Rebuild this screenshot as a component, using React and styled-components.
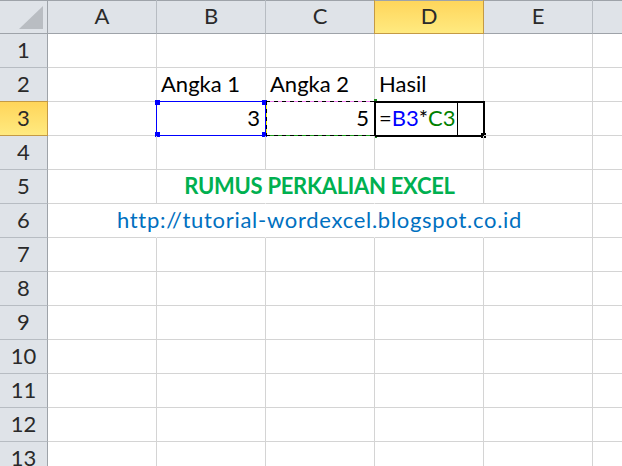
import React from 'react';
import styled, { createGlobalStyle, css } from 'styled-components';

const GlobalStyle = createGlobalStyle`
  html, body { margin: 0; padding: 0; background: #fff; }
  body { width: 622px; height: 466px; overflow: hidden; }
  #root { width: 622px; height: 466px; overflow: hidden; }
`;

const FONT = `Lato, "Open Sans", "Liberation Sans", sans-serif`;
const HEAD_LINE = '#b7bcc2';
const HEAD_DARK = '#9ea3a9';
const GRID = '#d4d4d4';
const SEL_BORDER = '#c49a45';

const Sheet = styled.div`
  display: grid;
  grid-template-columns: 48px repeat(6, 109px);
  grid-template-rows: repeat(14, 34px);
  width: 702px;
  background: #fff;
  font-family: ${FONT};
  font-size: 22px;
  color: #000;
`;

const headerBase = css`
  box-sizing: border-box;
  position: relative;
  display: flex;
  align-items: center;
  justify-content: center;
  background: #dfe3e8;
  color: #2a2a2a;
  line-height: 1.2;
  border-right: 1px solid ${HEAD_LINE};
  border-bottom: 1px solid ${HEAD_LINE};
`;

const activeHeader = css`
  background: linear-gradient(#ffd55a, #ffea80);
  border-right-color: ${SEL_BORDER};
  border-bottom-color: ${SEL_BORDER};
`;

const Corner = styled.div`
  ${headerBase}
  justify-content: flex-end;
  align-items: flex-end;
  padding: 0 4px 4px 0;
  border-right-color: ${HEAD_DARK};
  border-bottom-color: ${HEAD_DARK};
  box-shadow: inset 0 1px 0 ${HEAD_DARK};
`;

const CornerTriangle = styled.div`
  width: 24px;
  height: 23px;
  background: #b9bdc2;
  clip-path: polygon(100% 0, 100% 100%, 0 100%);
`;

const ColHeader = styled.div`
  ${headerBase}
  border-bottom-color: ${HEAD_DARK};
  box-shadow: inset 0 1px 0 ${HEAD_DARK};
  ${p => p.$active && css`
    ${activeHeader}
    box-shadow: inset 0 1px 0 ${HEAD_DARK}, -1px 0 0 ${SEL_BORDER};
  `}
`;

const RowHeader = styled.div`
  ${headerBase}
  border-right-color: ${HEAD_DARK};
  ${p => p.$active && css`
    ${activeHeader}
    box-shadow: 0 -1px 0 ${SEL_BORDER};
  `}
`;

const justifyMap = { left: 'flex-start', right: 'flex-end', center: 'center' };

const Cell = styled.div`
  box-sizing: border-box;
  position: relative;
  display: flex;
  align-items: center;
  justify-content: ${p => justifyMap[p.$align || 'left']};
  padding: 0 5px 0 4px;
  border-right: 1px solid ${p => (p.$open ? '#fff' : GRID)};
  border-bottom: 1px solid ${GRID};
  white-space: nowrap;
  line-height: 1.2;
  min-width: 0;
`;

const Text = styled.span`
  color: ${p => p.$color || '#000'};
  font-weight: ${p => (p.$bold ? 700 : 400)};
  letter-spacing: ${p => p.$spacing || 0}px;
`;

const RangeBox = styled.div`
  position: absolute;
  top: -1px;
  left: -1px;
  right: -1px;
  bottom: -1px;
  border: 1px solid #0000ff;
  pointer-events: none;
`;

const Handle = styled.div`
  position: absolute;
  width: ${p => p.$size || 5}px;
  height: ${p => p.$size || 5}px;
  background: ${p => p.$color};
  ${p => (p.$v === 'top' ? 'top: -2px;' : 'bottom: -2px;')}
  ${p => (p.$h === 'left' ? 'left: -2px;' : 'right: -2px;')}
`;

const Marquee = styled.div`
  position: absolute;
  top: -1px;
  left: 0;
  right: -1px;
  bottom: -1px;
  pointer-events: none;
  background:
    repeating-linear-gradient(90deg, #000 0 4px, #f07ef0 4px 8px) top left / 100% 1px no-repeat,
    repeating-linear-gradient(90deg, #000 0 4px, #1a9a1a 4px 8px) bottom left / 100% 1px no-repeat,
    repeating-linear-gradient(180deg, #000 0 4px, #f0f000 4px 8px) top left / 1px 100% no-repeat,
    repeating-linear-gradient(180deg, #1a9a1a 0 4px, #f07ef0 4px 8px) top right / 1px 100% no-repeat;
`;

const ActiveBox = styled.div`
  position: absolute;
  top: -1px;
  left: -1px;
  right: -2px;
  bottom: -2px;
  border: 2px solid #000;
  pointer-events: none;
`;

const FillHandle = styled.div`
  position: absolute;
  right: -4px;
  bottom: -4px;
  width: 5px;
  height: 5px;
  background: #000;
  border: 1px solid #fff;
  border-left-width: 0;
  border-top-width: 0;
`;

const Formula = styled.div`
  display: flex;
  align-items: center;
  align-self: stretch;
`;

const Caret = styled.span`
  align-self: stretch;
  width: 1px;
  margin: -1px 0 -1px 1px;
  background: #000;
`;

const COLS = ['A', 'B', 'C', 'D', 'E', 'F'];
const ROWS = Array.from({ length: 13 }, (_, i) => i + 1);

const cells = {
  B2: { text: 'Angka 1' },
  C2: { text: 'Angka 2' },
  D2: { text: 'Hasil' },
  B3: { text: '3', align: 'right', range: true },
  C3: { text: '5', align: 'right', marquee: true },
  D3: { formula: true },
  B5: { open: true },
  C5: { text: 'RUMUS PERKALIAN EXCEL', align: 'center', bold: true, color: '#00b050', open: true, spacing: -0.3 },
  A6: { open: true },
  B6: { open: true },
  C6: { text: 'http://tutorial-wordexcel.blogspot.co.id', align: 'center', color: '#0070c0', open: true, spacing: 0.72 },
  D6: { open: true },
};

function SheetCell({ id }) {
  const c = cells[id] || {};
  return (
    <Cell $align={c.align} $open={c.open}>
      {c.text && (
        <Text $bold={c.bold} $color={c.color} $spacing={c.spacing}>
          {c.text}
        </Text>
      )}
      {c.formula && (
        <Formula>
          <Text>=</Text>
          <Text $color="#0000ff">B3</Text>
          <Text>*</Text>
          <Text $color="#008000">C3</Text>
          <Caret />
        </Formula>
      )}
      {c.range && (
        <RangeBox>
          <Handle $color="#0000ff" $v="top" $h="left" />
          <Handle $color="#0000ff" $v="top" $h="right" />
          <Handle $color="#0000ff" $v="bottom" $h="left" />
          <Handle $color="#0000ff" $v="bottom" $h="right" />
        </RangeBox>
      )}
      {c.marquee && (
        <Marquee>
          <Handle $color="#1a8a1a" $size={3} $v="top" $h="right" />
          <Handle $color="#1a8a1a" $size={3} $v="bottom" $h="right" />
        </Marquee>
      )}
      {c.formula && (
        <>
          <ActiveBox />
          <FillHandle />
        </>
      )}
    </Cell>
  );
}

export default function App() {
  return (
    <>
      <GlobalStyle />
      <Sheet>
        <Corner>
          <CornerTriangle />
        </Corner>
        {COLS.map(col => (
          <ColHeader key={col} $active={col === 'D'}>
            {col === 'F' ? '' : col}
          </ColHeader>
        ))}
        {ROWS.map(r => (
          <React.Fragment key={r}>
            <RowHeader $active={r === 3}>{r}</RowHeader>
            {COLS.map(col => (
              <SheetCell key={col + r} id={col + r} />
            ))}
          </React.Fragment>
        ))}
      </Sheet>
    </>
  );
}
